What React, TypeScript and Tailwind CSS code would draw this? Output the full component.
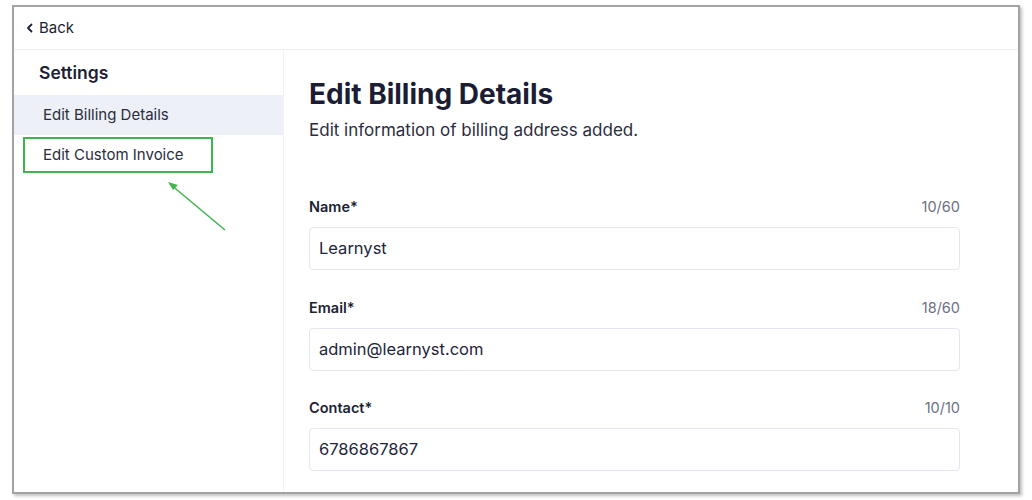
import React from "react";

const fields = [
  { label: "Name*", count: "10/60", value: "Learnyst" },
  { label: "Email*", count: "18/60", value: "admin@learnyst.com" },
  { label: "Contact*", count: "10/10", value: "6786867867" },
];

export default function App() {
  return (
    <div
      className="relative w-[1032px] h-[500px] bg-white overflow-hidden pl-[12px] pt-[5px]"
      style={{ fontFamily: "Inter, 'Liberation Sans', sans-serif" }}
    >
      <div className="w-[1008px] h-[489px] border-2 border-[#a3a3a3] bg-white shadow-[2px_2px_3px_rgba(0,0,0,0.25)] flex flex-col">
        {/* header */}
        <div className="h-[43px] shrink-0 flex items-center pl-[12px] gap-[5px] border-b border-[#eef0f5] text-[#1c1f33]">
          <svg width="8" height="10" viewBox="0 0 8 10" fill="none">
            <path d="M5.5 1.5 2 5l3.5 3.5" stroke="#1c1f33" strokeWidth="1.8" strokeLinecap="round" strokeLinejoin="round" />
          </svg>
          <span className="text-[15px]">Back</span>
        </div>

        <div className="flex flex-1 min-h-0">
          {/* sidebar */}
          <div className="w-[270px] shrink-0 border-r border-[#f1f2f6] pt-[11px]">
            <div className="pl-[25px] text-[17.5px] leading-[24px] font-semibold text-[#1c1f33]">Settings</div>
            <div className="mt-[10px] h-[40px] bg-[#edf0f6] flex items-center pl-[29px] text-[15px] text-[#2a2d40]">
              Edit Billing Details
            </div>
            <div className="h-[40px] flex items-center pl-[29px] text-[15px] text-[#2a2d40]">
              Edit Custom Invoice
            </div>
          </div>

          {/* main */}
          <div className="flex-1 pl-[25px] pt-[26px]">
            <h1 className="text-[28px] leading-[36px] font-bold text-[#1a1d33]">Edit Billing Details</h1>
            <p className="mt-[6px] text-[17px] leading-[24px] text-[#2a2d40]">Edit information of billing address added.</p>
            <div className="mt-[55px] w-[651px] flex flex-col gap-[27.5px]">
              {fields.map((f) => (
                <div key={f.label}>
                  <div className="flex justify-between items-center h-[20px]">
                    <span className="text-[14.5px] font-semibold text-[#1c1f33]">{f.label}</span>
                    <span className="text-[14.5px] text-[#6b7085]">{f.count}</span>
                  </div>
                  <div className="mt-[10px] h-[43px] border border-[#e4e7ef] rounded-[4px] flex items-center pl-[9px] text-[16.5px] text-[#22253a]">
                    {f.value}
                  </div>
                </div>
              ))}
            </div>
          </div>
        </div>
      </div>

      {/* annotation */}
      <div className="absolute left-[23px] top-[137px] w-[190px] h-[36px] border-2 border-[#3fb54e]" />
      <svg className="absolute left-[160px] top-[176px]" width="72" height="60" viewBox="0 0 72 60" fill="none">
        <line x1="65" y1="54" x2="10" y2="8" stroke="#45b552" strokeWidth="1.6" />
        <path d="M8 6 18 9 13 14Z" fill="#45b552" />
      </svg>
    </div>
  );
}
